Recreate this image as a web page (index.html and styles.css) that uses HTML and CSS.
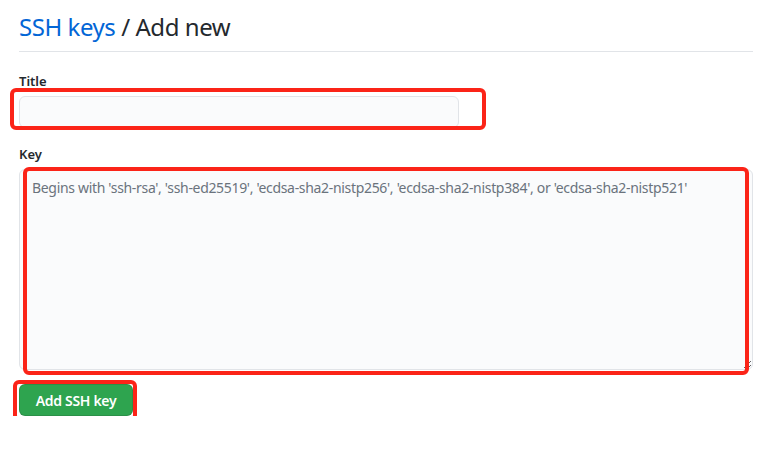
FILE: index.html
```html
<!DOCTYPE html>
<html lang="en">
<head>
<meta charset="utf-8">
<title>SSH keys / Add new</title>
<link rel="stylesheet" href="styles.css">
</head>
<body>
<div class="page">
  <h2 class="subhead"><a class="crumb" href="#">SSH keys</a> / Add new</h2>
  <form class="form">
    <div class="form-group">
      <label class="label" for="title">Title</label>
      <input class="form-control title-input" id="title" type="text">
    </div>
    <div class="form-group">
      <label class="label" for="key">Key</label>
      <textarea class="form-control key-input" id="key" placeholder="Begins with 'ssh-rsa', 'ssh-ed25519', 'ecdsa-sha2-nistp256', 'ecdsa-sha2-nistp384', or 'ecdsa-sha2-nistp521'"></textarea>
    </div>
    <button class="btn-primary" type="button">Add SSH key</button>
  </form>
  <div class="mark mark-title"></div>
  <div class="mark mark-key"></div>
  <div class="mark mark-btn"></div>
</div>
</body>
</html>
```

FILE: styles.css
```css
html, body {
  margin: 0;
  padding: 0;
  background: #ffffff;
}

.page {
  position: relative;
  padding: 0 26px 0 19px;
  font-family: "Noto Sans", "Open Sans", sans-serif;
  color: #24292e;
  font-size: 14px;
}

.subhead {
  margin: 0;
  padding-top: 12px;
  padding-bottom: 10px;
  font-size: 24px;
  line-height: 29px;
  font-weight: 400;
  letter-spacing: -0.45px;
  border-bottom: 1px solid #e1e4e8;
}

.crumb {
  color: #0366d6;
  text-decoration: none;
}

.form {
  padding-top: 19px;
}

.form-group {
  margin-bottom: 16px;
}

.label {
  display: block;
  font-weight: 600;
  font-size: 13px;
  line-height: 20px;
  margin-bottom: 5px;
}

.form-control {
  display: block;
  box-sizing: border-box;
  font-family: inherit;
  font-size: 14px;
  line-height: 20px;
  letter-spacing: -0.32px;
  color: #24292e;
  background: #fafbfc;
  border: 1px solid #e1e4e8;
  border-radius: 6px;
  padding: 5px 12px;
  outline: none;
}

.form-control::placeholder {
  color: #6a737d;
}

.title-input {
  width: 440px;
  height: 32px;
}

.key-input {
  width: 734px;
  height: 201px;
  padding: 8px 12px;
  resize: vertical;
}

.btn-primary {
  display: block;
  margin-top: -2px;
  height: 32px;
  width: 114px;
  padding: 0;
  white-space: nowrap;
  text-align: center;
  font-family: inherit;
  font-size: 14px;
  font-weight: 600;
  letter-spacing: -0.3px;
  color: #ffffff;
  background: #2ea44f;
  border: 1px solid rgba(27, 31, 35, 0.15);
  border-radius: 6px;
}

.mark {
  position: absolute;
  box-sizing: border-box;
  border: 4px solid #fb2418;
  border-radius: 6px;
  pointer-events: none;
}

.mark-title {
  left: 10px;
  top: 88px;
  width: 476px;
  height: 42px;
}

.mark-key {
  left: 23px;
  top: 167px;
  width: 726px;
  height: 208px;
}

.mark-btn {
  left: 13px;
  top: 380px;
  width: 124px;
  height: 41px;
}
```
